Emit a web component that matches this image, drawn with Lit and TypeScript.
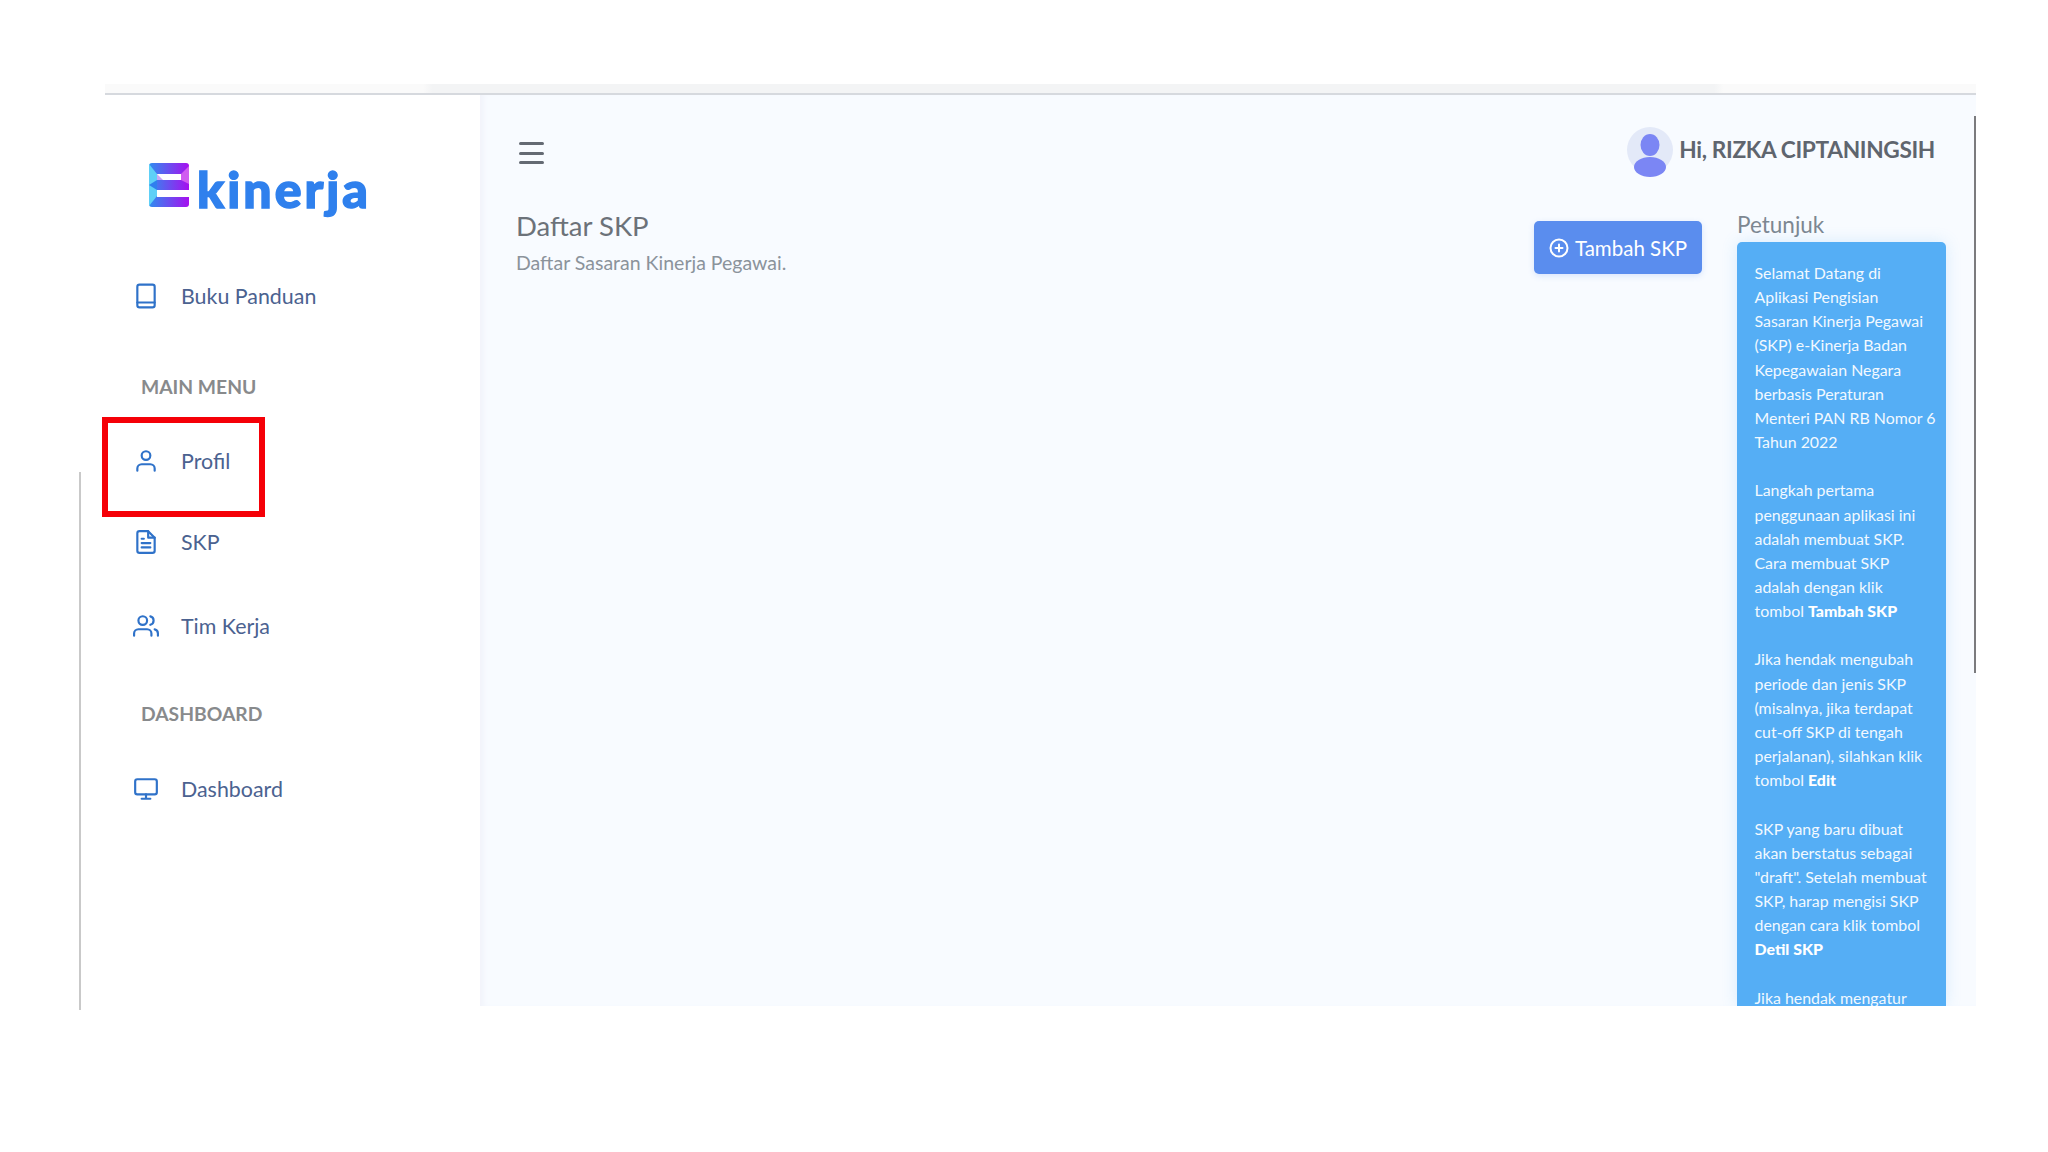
import { LitElement, html, css, svg } from "lit";
import { customElement } from "lit/decorators.js";

const I = { fill: "none", stroke: "#2f72c9" };

const icons = {
  book: svg`<rect x="4" y="1.5" width="16" height="21" rx="2"/><path d="M4 18h16"/>`,
  user: svg`<path d="M20 21v-2a4 4 0 0 0-4-4H8a4 4 0 0 0-4 4v2"/><circle cx="12" cy="7" r="4"/>`,
  file: svg`<path d="M14 2H6a2 2 0 0 0-2 2v16a2 2 0 0 0 2 2h12a2 2 0 0 0 2-2V8z"/><path d="M14 2v6h6M16 13H8M16 17H8M10 9H8"/>`,
  users: svg`<path d="M17 21v-2a4 4 0 0 0-4-4H5a4 4 0 0 0-4 4v2"/><circle cx="9" cy="7" r="4"/><path d="M23 21v-2a4 4 0 0 0-3-3.87M16 3.13a4 4 0 0 1 0 7.75"/>`,
  monitor: svg`<rect x="2" y="3" width="20" height="14" rx="2"/><path d="M8 21h8M12 17v4"/>`,
};

const icon = (name: keyof typeof icons) => html`<svg class="ic" viewBox="0 0 24 24" width="26" height="26" fill=${I.fill} stroke=${I.stroke} stroke-width="2" stroke-linecap="round" stroke-linejoin="round">${icons[name]}</svg>`;

const PARAS = [
  html`Selamat Datang di<br>Aplikasi Pengisian<br>Sasaran Kinerja Pegawai<br>(SKP) e-Kinerja Badan<br>Kepegawaian Negara<br>berbasis Peraturan<br>Menteri PAN RB Nomor 6<br>Tahun 2022`,
  html`Langkah pertama<br>penggunaan aplikasi ini<br>adalah membuat SKP.<br>Cara membuat SKP<br>adalah dengan klik<br>tombol <b>Tambah SKP</b>`,
  html`Jika hendak mengubah<br>periode dan jenis SKP<br>(misalnya, jika terdapat<br>cut-off SKP di tengah<br>perjalanan), silahkan klik<br>tombol <b>Edit</b>`,
  html`SKP yang baru dibuat<br>akan berstatus sebagai<br>"draft". Setelah membuat<br>SKP, harap mengisi SKP<br>dengan cara klik tombol<br><b>Detil SKP</b>`,
  html`Jika hendak mengatur`,
];

@customElement("app-root")
export class AppRoot extends LitElement {
  static styles = css`
    :host { display: block; height: 1152px; background: #fff; font-family: Lato, "Liberation Sans", sans-serif; overflow: hidden; }
    .page { display: flex; align-items: flex-start; height: 1010px; padding: 84px 0 0 79px; box-sizing: border-box; }
    .gutter { align-self: flex-end; width: 2px; height: 538px; background: #c9c9c9; margin-right: 24px; flex: none; }
    .window { width: 1871px; height: 922px; display: flex; flex-direction: column; flex: none; position: relative; }
    .band { height: 9px; background: linear-gradient(90deg, #fafafa 0, #fafafa 17%, #f3f4f5 17.5%, #f3f4f5 86%, #fafafa 86.5%); border-bottom: 2px solid #d6d9de; flex: none; }
    .body { flex: 1; display: flex; min-height: 0; }
    .side { width: 375px; flex: none; background: #fff; display: flex; flex-direction: column; }
    .logo { display: flex; align-items: flex-start; gap: 8px; padding: 68px 0 0 44px; height: 105px; flex: none; }
    .wordmark { font: 900 50px/1 Lato, sans-serif; color: #2f80ed; letter-spacing: 3px; -webkit-text-stroke: 1.5px #2f80ed; margin-top: 1px; }
    .menu { display: flex; flex-direction: column; padding-left: 28px; }
    .item { display: flex; align-items: center; height: 40px; gap: 22px; font-size: 21.4px; color: #4b6290; }
    .ic { flex: none; width: 26px; height: 26px; }
    .label { font-size: 19.3px; font-weight: 700; color: #888a8c; padding-left: 8px; height: 26px; line-height: 26px; }
    .m1 { margin-top: 8px; }
    .m2 { margin-top: 58px; }
    .m3 { margin-top: 41px; }
    .m4 { margin-top: 41px; }
    .m5 { margin-top: 44px; }
    .m6 { margin-top: 55px; }
    .m7 { margin-top: 42px; }
    .profil { position: relative; }
    .redbox { position: absolute; left: -31px; top: -24px; width: 163px; height: 100px; box-sizing: border-box; border: 6px solid #f50007; }
    .main { flex: 1; min-width: 0; background: #f8fbff; box-shadow: inset 6px 0 5px -2px #f2f4fb; display: flex; flex-direction: column; overflow: hidden; padding: 0 30px 0 36px; position: relative; }
    .top { display: flex; align-items: flex-start; justify-content: space-between; flex: none; height: 116px; box-sizing: border-box; padding: 0 11px 0 3px; }
    .burger { width: 25px; display: flex; flex-direction: column; gap: 6.5px; margin-top: 47px; }
    .burger i { display: block; height: 3px; border-radius: 2px; background: #646a73; }
    .user { display: flex; align-items: center; gap: 6px; font-size: 22.7px; letter-spacing: -0.35px; font-weight: 700; color: #5f656e; margin-top: 30px; }
    .user span { margin-top: -4px; }
    .avatar { width: 46px; height: 52px; flex: none; display: block; }
    .content { flex: 1; display: flex; min-height: 0; }
    .titles { flex: 1; margin-top: -1px; }
    h1 { margin: 0; font-size: 27.5px; line-height: 32px; font-weight: 400; color: #6c7279; }
    .sub { font-size: 19.5px; line-height: 26px; color: #8b939b; margin-top: 8px; }
    .btn { flex: none; width: 168px; height: 53px; margin-top: 10px; background: #5a8dee; border-radius: 5px; color: #fff; font-size: 20.5px; display: flex; align-items: center; justify-content: center; gap: 6px; box-shadow: 0 2px 6px #5a8dee33; }
    .aside { width: 209px; flex: none; margin-left: 35px; display: flex; flex-direction: column; min-height: 0; }
    .aside h2 { margin: -2px 0 0; font-size: 22.5px; font-weight: 400; color: #7d8791; line-height: 32px; height: 33px; flex: none; }
    .card { flex: 1; min-height: 0; background: #55aef5; border-radius: 5px 5px 0 0; box-shadow: 0 0 16px #55aef533; color: #f2f9ff; font-size: 15.9px; line-height: 24.15px; padding: 19px 6px 0 17.5px; overflow: hidden; white-space: nowrap; }
    .card p { margin: 0 0 24.15px; }
    .card b { font-weight: 900; color: #fff; }
    .scroll { position: absolute; right: 0; top: 21px; width: 2px; height: 557px; background: #7b7b7e; }
  `;

  render() {
    return html`<div class="page">
      <div class="gutter"></div>
      <div class="window">
        <div class="band"></div>
        <div class="body">
          <aside class="side">
            <div class="logo">
              <svg width="40" height="44" viewBox="0 0 40 44" style="flex:none">
                <defs>
                  <linearGradient id="g" x1="0" x2="1"><stop offset="0" stop-color="#2f8df0"/><stop offset="1" stop-color="#a60fef"/></linearGradient>
                </defs>
                <rect width="40" height="44" rx="3" fill="url(#g)"/>
                <polygon points="0,1 8,11 8,33 0,43" fill="#5ed0f7"/>
                <polygon points="0,22 8,17 8,27" fill="#2f7fee"/>
                <polygon points="8,11 32,11 32,17 8,17" fill="#fff"/>
                <polygon points="8,27 40,27 40,34 8,34" fill="#fff"/>
                <polygon points="32,11 40,11 40,17 32,17" fill="#fff"/>
                <polygon points="8,11 14,17 8,17" fill="#c9a6f6"/>
                <polygon points="32,17 40,21 40,3 32,11" fill="#d05cf0"/>
              </svg>
              <div class="wordmark">kinerja</div>
            </div>
            <nav class="menu">
              <div class="item m1">${icon("book")}<span>Buku Panduan</span></div>
              <div class="label m2">MAIN MENU</div>
              <div class="item m3 profil"><div class="redbox"></div>${icon("user")}<span>Profil</span></div>
              <div class="item m4">${icon("file")}<span>SKP</span></div>
              <div class="item m5">${icon("users")}<span>Tim Kerja</span></div>
              <div class="label m6">DASHBOARD</div>
              <div class="item m7">${icon("monitor")}<span>Dashboard</span></div>
            </nav>
          </aside>
          <main class="main">
            <div class="top">
              <div class="burger"><i></i><i></i><i></i></div>
              <div class="user">
                <svg class="avatar" viewBox="0 0 46 52">
                  <circle cx="23" cy="25" r="23" fill="#e3e9f8"/>
                  <ellipse cx="23" cy="20" rx="9.5" ry="11" fill="#7b86f4"/>
                  <ellipse cx="23" cy="42" rx="16" ry="10" fill="#7b86f4"/>
                </svg>
                <span>Hi, RIZKA CIPTANINGSIH</span>
              </div>
            </div>
            <div class="content">
              <div class="titles">
                <h1>Daftar SKP</h1>
                <div class="sub">Daftar Sasaran Kinerja Pegawai.</div>
              </div>
              <div class="btn">
                <svg width="20" height="20" viewBox="0 0 20 20" fill="none" stroke="#fff" stroke-width="2" stroke-linecap="round"><circle cx="10" cy="10" r="8.5"/><path d="M10 6.5v7M6.5 10h7"/></svg>
                <span>Tambah SKP</span>
              </div>
              <div class="aside">
                <h2>Petunjuk</h2>
                <div class="card">${PARAS.map((p) => html`<p>${p}</p>`)}</div>
              </div>
            </div>
            <div class="scroll"></div>
          </main>
        </div>
      </div>
    </div>`;
  }
}
